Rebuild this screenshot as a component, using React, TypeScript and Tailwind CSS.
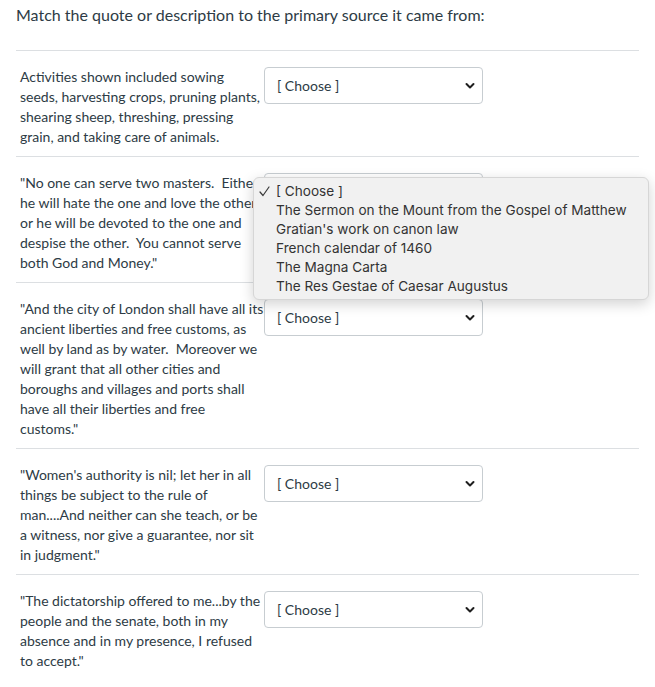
import React from "react";

type Item = { lines: string[] };

const items: Item[] = [
  {
    lines: [
      "Activities shown included sowing",
      "seeds, harvesting crops, pruning plants,",
      "shearing sheep, threshing, pressing",
      "grain, and taking care of animals.",
    ],
  },
  {
    lines: [
      "\"No one can serve two masters.\u00a0 Either",
      "he will hate the one and love the other,",
      "or he will be devoted to the one and",
      "despise the other.\u00a0 You cannot serve",
      "both God and Money.\"",
    ],
  },
  {
    lines: [
      "\"And the city of London shall have all its",
      "ancient liberties and free customs, as",
      "well by land as by water.\u00a0 Moreover we",
      "will grant that all other cities and",
      "boroughs and villages and ports shall",
      "have all their liberties and free",
      "customs.\"",
    ],
  },
  {
    lines: [
      "\"Women's authority is nil; let her in all",
      "things be subject to the rule of",
      "man....And neither can she teach, or be",
      "a witness, nor give a guarantee, nor sit",
      "in judgment.\"",
    ],
  },
  {
    lines: [
      "\"The dictatorship offered to me...by the",
      "people and the senate, both in my",
      "absence and in my presence, I refused",
      "to accept.\"",
    ],
  },
];

const options = [
  "[ Choose ]",
  "The Sermon on the Mount from the Gospel of Matthew",
  "Gratian's work on canon law",
  "French calendar of 1460",
  "The Magna Carta",
  "The Res Gestae of Caesar Augustus",
];

function Chevron() {
  return (
    <svg width="10" height="8" viewBox="0 0 10 8" className="shrink-0">
      <path d="M1.5 2 L5 5.5 L8.5 2" fill="none" stroke="#1f1f1f" strokeWidth="2" strokeLinecap="round" strokeLinejoin="round" />
    </svg>
  );
}

function Check() {
  return (
    <svg width="11" height="11" viewBox="0 0 11 11">
      <path d="M1 6 L4 9.5 L10 1" fill="none" stroke="#3a3a3a" strokeWidth="1.2" strokeLinecap="round" strokeLinejoin="round" />
    </svg>
  );
}

function ChooseBox() {
  return (
    <div className="relative z-10 flex h-[37px] w-[219px] shrink-0 items-center justify-between rounded-[4px] border border-[#c7cdd1] bg-white pl-[12px] pr-[7px] text-[14px] text-[#2d3b45]">
      <span>[ Choose ]</span>
      <Chevron />
    </div>
  );
}

export default function App() {
  return (
    <div className="relative h-[687px] w-[655px] overflow-hidden bg-white font-['Lato',sans-serif] text-[#2d3b45]">
      <p className="pl-4 pt-[3px] text-[16px] leading-6">
        Match the quote or description to the primary source it came from:
      </p>
      <div className="mx-4 mt-[23px]">
        {items.map((item, i) => (
          <div key={i} className="flex border-t border-[#dcdfe2] pb-[9px] pl-1 pt-4">
            <div className="w-[244px] shrink-0 whitespace-nowrap text-[14px] leading-5">
              {item.lines.map((l, j) => (
                <div key={j}>{l}</div>
              ))}
            </div>
            <ChooseBox />
          </div>
        ))}
      </div>

      {/* open option list of the second select */}
      <div className="absolute left-[253px] top-[177px] z-20 w-[396px] rounded-[6px] border border-[#d6d6d6] bg-[#f1f1f1] pb-[3px] pt-[4px] font-['Inter',sans-serif] text-[13.6px] text-[#333333] shadow-[0_4px_14px_rgba(0,0,0,0.18)]">
        {options.map((o, i) => (
          <div key={i} className="flex h-[19px] items-center">
            <span className="flex w-[22px] shrink-0 items-center pl-[5px]">{i === 0 ? <Check /> : null}</span>
            <span className="leading-none">{o}</span>
          </div>
        ))}
      </div>
    </div>
  );
}
